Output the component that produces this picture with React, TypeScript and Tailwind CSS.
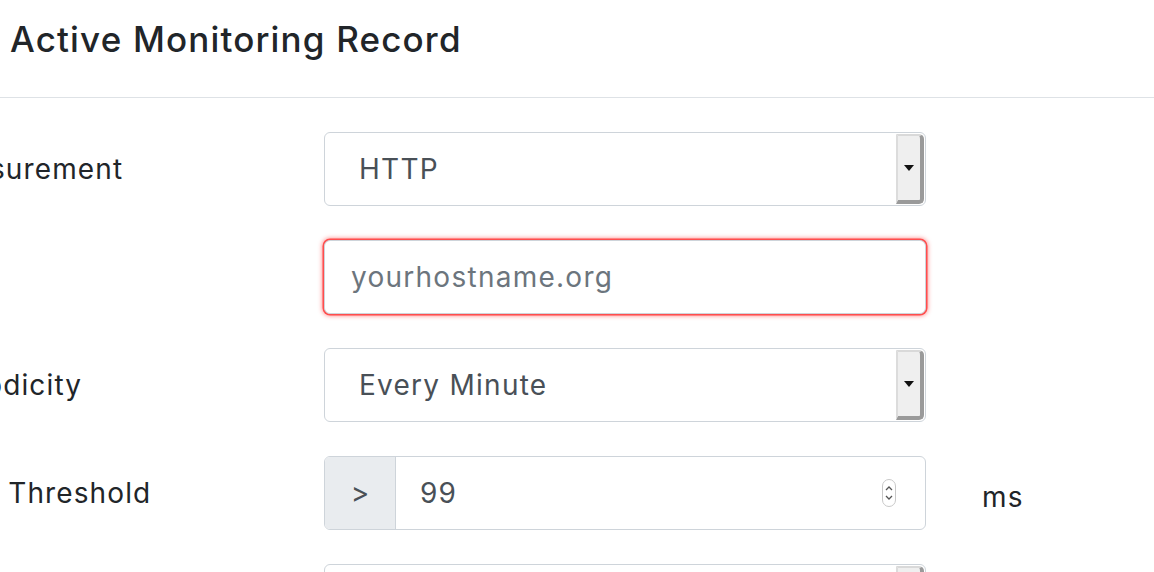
import React from "react";

const font = { fontFamily: "Inter, 'Noto Sans', sans-serif" };

function NativeSelect({ value }: { value: string }) {
  return (
    <div className="flex h-[74px] w-[602px] items-stretch rounded-[6px] border border-[#ced4da] bg-white">
      <div className="flex flex-1 items-center pl-[34px] text-[28px] tracking-[0.045em] text-[#495057]">
        {value}
      </div>
      {/* old style native dropdown button */}
      <div className="my-px mr-px flex w-[28px] items-center justify-center rounded-tr-[5px] rounded-br-[5px] border-t-2 border-l-2 border-r-[4px] border-b-[4px] border-t-[#d9d9d9] border-l-[#dcdcdc] border-r-[#9a9a9a] border-b-[#9a9a9a] bg-[#efefef]">
        <svg width="10" height="6" viewBox="0 0 10 6">
          <path d="M0 0 H10 L5 6 Z" fill="#111" />
        </svg>
      </div>
    </div>
  );
}

function Row({
  label,
  children,
  extra,
}: {
  label: string;
  children: React.ReactNode;
  extra?: React.ReactNode;
}) {
  return (
    <div className="flex h-[74px] items-center">
      <div className="w-[395px] shrink-0 whitespace-nowrap text-[28px] tracking-[0.04em] text-[#212529]">
        {label}
      </div>
      {children}
      {extra}
    </div>
  );
}

export default function App() {
  return (
    <div className="h-[572px] w-[1154px] overflow-hidden bg-white" style={font}>
      <div className="h-[98px] border-b border-[#dee2e6] pl-[10px] pt-[18px]">
        <h5 className="text-[35px] leading-[42px] font-medium tracking-[0.033em] text-[#212529]">
          Active Monitoring Record
        </h5>
      </div>

      <div className="ml-[-71px] mt-[34px] flex flex-col gap-[34px]">
        <Row label="Measurement">
          <NativeSelect value="HTTP" />
        </Row>

        <Row label="">
          <div className="flex h-[74px] w-[602px] items-center rounded-[6px] border border-[#ced4da] bg-white pl-[26px] text-[28px] tracking-[0.045em] text-[#6c757d] shadow-[0_0_0_1.5px_#ff4d4d,0_0_4px_2px_rgba(255,40,40,0.5)]">
            yourhostname.org
          </div>
        </Row>

        <Row label="Periodicity">
          <NativeSelect value="Every Minute" />
        </Row>

        <Row
          label="Time Threshold"
          extra={
            <span className="ml-[56px] pt-[8px] text-[28px] tracking-[0.04em] text-[#212529]">
              ms
            </span>
          }
        >
          <div className="flex h-[74px] w-[602px] items-stretch overflow-hidden rounded-[6px] border border-[#ced4da] bg-white">
            <div className="flex w-[71px] items-center justify-center border-r border-[#ced4da] bg-[#e9ecef] text-[28px] text-[#495057]">
              &gt;
            </div>
            <div className="flex flex-1 items-center pl-[24px] text-[28px] tracking-[0.045em] text-[#495057]">
              99
            </div>
            <div className="flex items-center pr-[29px]">
              <svg width="14" height="28" viewBox="0 0 14 28">
                <rect x="0.5" y="0.5" width="13" height="27" rx="6.5" fill="#fff" stroke="#c8c8c8" />
                <path d="M4 11 L7 8 L10 11" fill="none" stroke="#555" strokeWidth="1.3" />
                <path d="M4 17 L7 20 L10 17" fill="none" stroke="#555" strokeWidth="1.3" />
              </svg>
            </div>
          </div>
        </Row>

        <Row label="Alert">
          <NativeSelect value="Critical" />
        </Row>
      </div>
    </div>
  );
}
